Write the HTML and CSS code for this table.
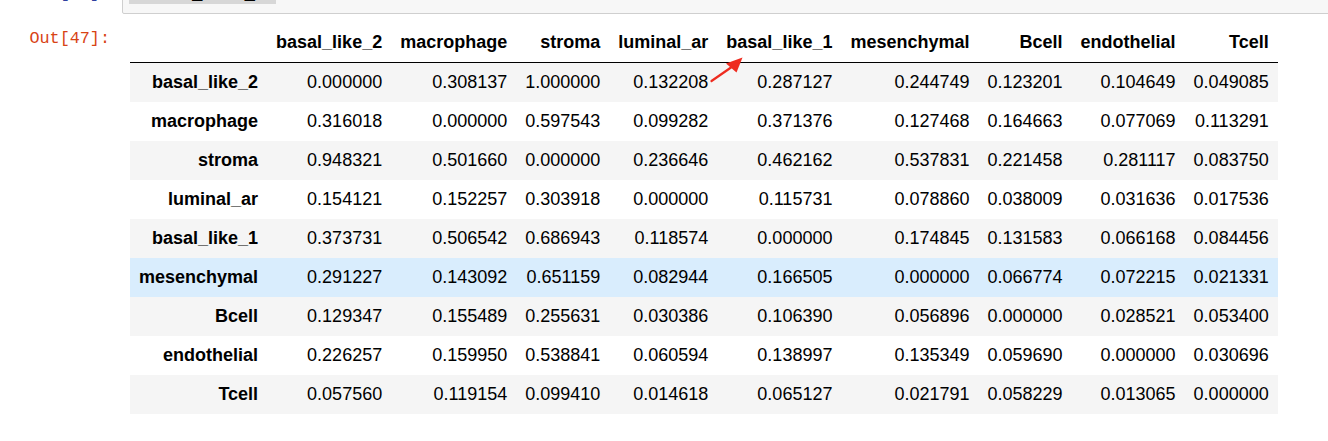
FILE: index.html
```html
<!DOCTYPE html>
<html>
<head>
<meta charset="utf-8">
<link rel="stylesheet" href="styles.css">
</head>
<body>
<div class="notebook">
  <div class="cell cell-in">
    <div class="prompt prompt-in">In&nbsp;[48]:</div>
    <div class="input-area">
      <div class="code-line"><span class="sel">cosine_dist_df</span></div>
    </div>
  </div>
  <div class="cell cell-out">
    <div class="prompt prompt-out">Out[47]:</div>
    <div class="output-subarea">
      <table class="dataframe">
        <thead>
          <tr>
            <th></th>
            <th>basal_like_2</th>
            <th>macrophage</th>
            <th>stroma</th>
            <th>luminal_ar</th>
            <th>basal_like_1</th>
            <th>mesenchymal</th>
            <th>Bcell</th>
            <th>endothelial</th>
            <th>Tcell</th>
          </tr>
        </thead>
        <tbody>
          <tr><th>basal_like_2</th><td>0.000000</td><td>0.308137</td><td>1.000000</td><td>0.132208</td><td>0.287127</td><td>0.244749</td><td>0.123201</td><td>0.104649</td><td>0.049085</td></tr>
          <tr><th>macrophage</th><td>0.316018</td><td>0.000000</td><td>0.597543</td><td>0.099282</td><td>0.371376</td><td>0.127468</td><td>0.164663</td><td>0.077069</td><td>0.113291</td></tr>
          <tr><th>stroma</th><td>0.948321</td><td>0.501660</td><td>0.000000</td><td>0.236646</td><td>0.462162</td><td>0.537831</td><td>0.221458</td><td>0.281117</td><td>0.083750</td></tr>
          <tr><th>luminal_ar</th><td>0.154121</td><td>0.152257</td><td>0.303918</td><td>0.000000</td><td>0.115731</td><td>0.078860</td><td>0.038009</td><td>0.031636</td><td>0.017536</td></tr>
          <tr><th>basal_like_1</th><td>0.373731</td><td>0.506542</td><td>0.686943</td><td>0.118574</td><td>0.000000</td><td>0.174845</td><td>0.131583</td><td>0.066168</td><td>0.084456</td></tr>
          <tr class="hover"><th>mesenchymal</th><td>0.291227</td><td>0.143092</td><td>0.651159</td><td>0.082944</td><td>0.166505</td><td>0.000000</td><td>0.066774</td><td>0.072215</td><td>0.021331</td></tr>
          <tr><th>Bcell</th><td>0.129347</td><td>0.155489</td><td>0.255631</td><td>0.030386</td><td>0.106390</td><td>0.056896</td><td>0.000000</td><td>0.028521</td><td>0.053400</td></tr>
          <tr><th>endothelial</th><td>0.226257</td><td>0.159950</td><td>0.538841</td><td>0.060594</td><td>0.138997</td><td>0.135349</td><td>0.059690</td><td>0.000000</td><td>0.030696</td></tr>
          <tr><th>Tcell</th><td>0.057560</td><td>0.119154</td><td>0.099410</td><td>0.014618</td><td>0.065127</td><td>0.021791</td><td>0.058229</td><td>0.013065</td><td>0.000000</td></tr>
        </tbody>
      </table>
    </div>
  </div>
  <svg class="annotation" width="1328" height="441" viewBox="0 0 1328 441">
    <line x1="711.5" y1="81" x2="731" y2="67.5" stroke="#ee2b1f" stroke-width="2.2" stroke-linecap="round"/>
    <polygon points="742.5,57.5 726,63.5 736.5,72.5" fill="#ee2b1f"/>
  </svg>
</div>
</body>
</html>
```
FILE: styles.css
```css
html, body {
  margin: 0;
  padding: 0;
  background: #ffffff;
  overflow: hidden;
}

body {
  font-family: "Liberation Sans", Arial, sans-serif;
  color: #000;
}

.notebook {
  position: relative;
  display: flow-root;
  width: 1328px;
  height: 441px;
}

.cell {
  display: flex;
  align-items: flex-start;
}

.prompt {
  width: 110px;
  padding-right: 12px;
  flex: none;
  text-align: right;
  font-family: "Liberation Mono", "Courier New", monospace;
  font-size: 16.8px;
  line-height: 20px;
  white-space: nowrap;
}

.cell-in {
  margin-top: -22px;
  align-items: flex-end;
}

.prompt-in {
  color: #303f9f;
  padding-bottom: 10px;
}

.input-area {
  flex: 1;
  margin-right: -10px;
  background: #f7f7f7;
  border: 1px solid #cfcfcf;
  border-radius: 2px;
  padding: 4px 6px 8px 6px;
}

.code-line {
  font-family: "Liberation Mono", "Courier New", monospace;
  font-size: 17.5px;
  line-height: 22px;
  color: #000;
  white-space: pre;
}

.sel {
  background: #d7d7d7;
}

.cell-out {
  margin-top: 9px;
}

.prompt-out {
  color: #d84315;
  padding-top: 6px;
}

.output-subarea {
  padding-left: 8px;
}

table.dataframe {
  border: none;
  border-collapse: collapse;
  border-spacing: 0;
  font-size: 18px;
  color: #000;
}

table.dataframe th,
table.dataframe td {
  text-align: right;
  vertical-align: middle;
  padding: 9px 9px;
  line-height: 21px;
  border: none;
  white-space: nowrap;
}

table.dataframe th {
  font-weight: bold;
}

table.dataframe thead th {
  vertical-align: bottom;
}

table.dataframe thead {
  border-bottom: 1px solid #000;
}

table.dataframe tbody tr:nth-child(odd) {
  background: #f5f5f5;
}

table.dataframe tbody tr.hover {
  background: #d9edfd;
}

.annotation {
  position: absolute;
  left: 0;
  top: 0;
  pointer-events: none;
}
```
